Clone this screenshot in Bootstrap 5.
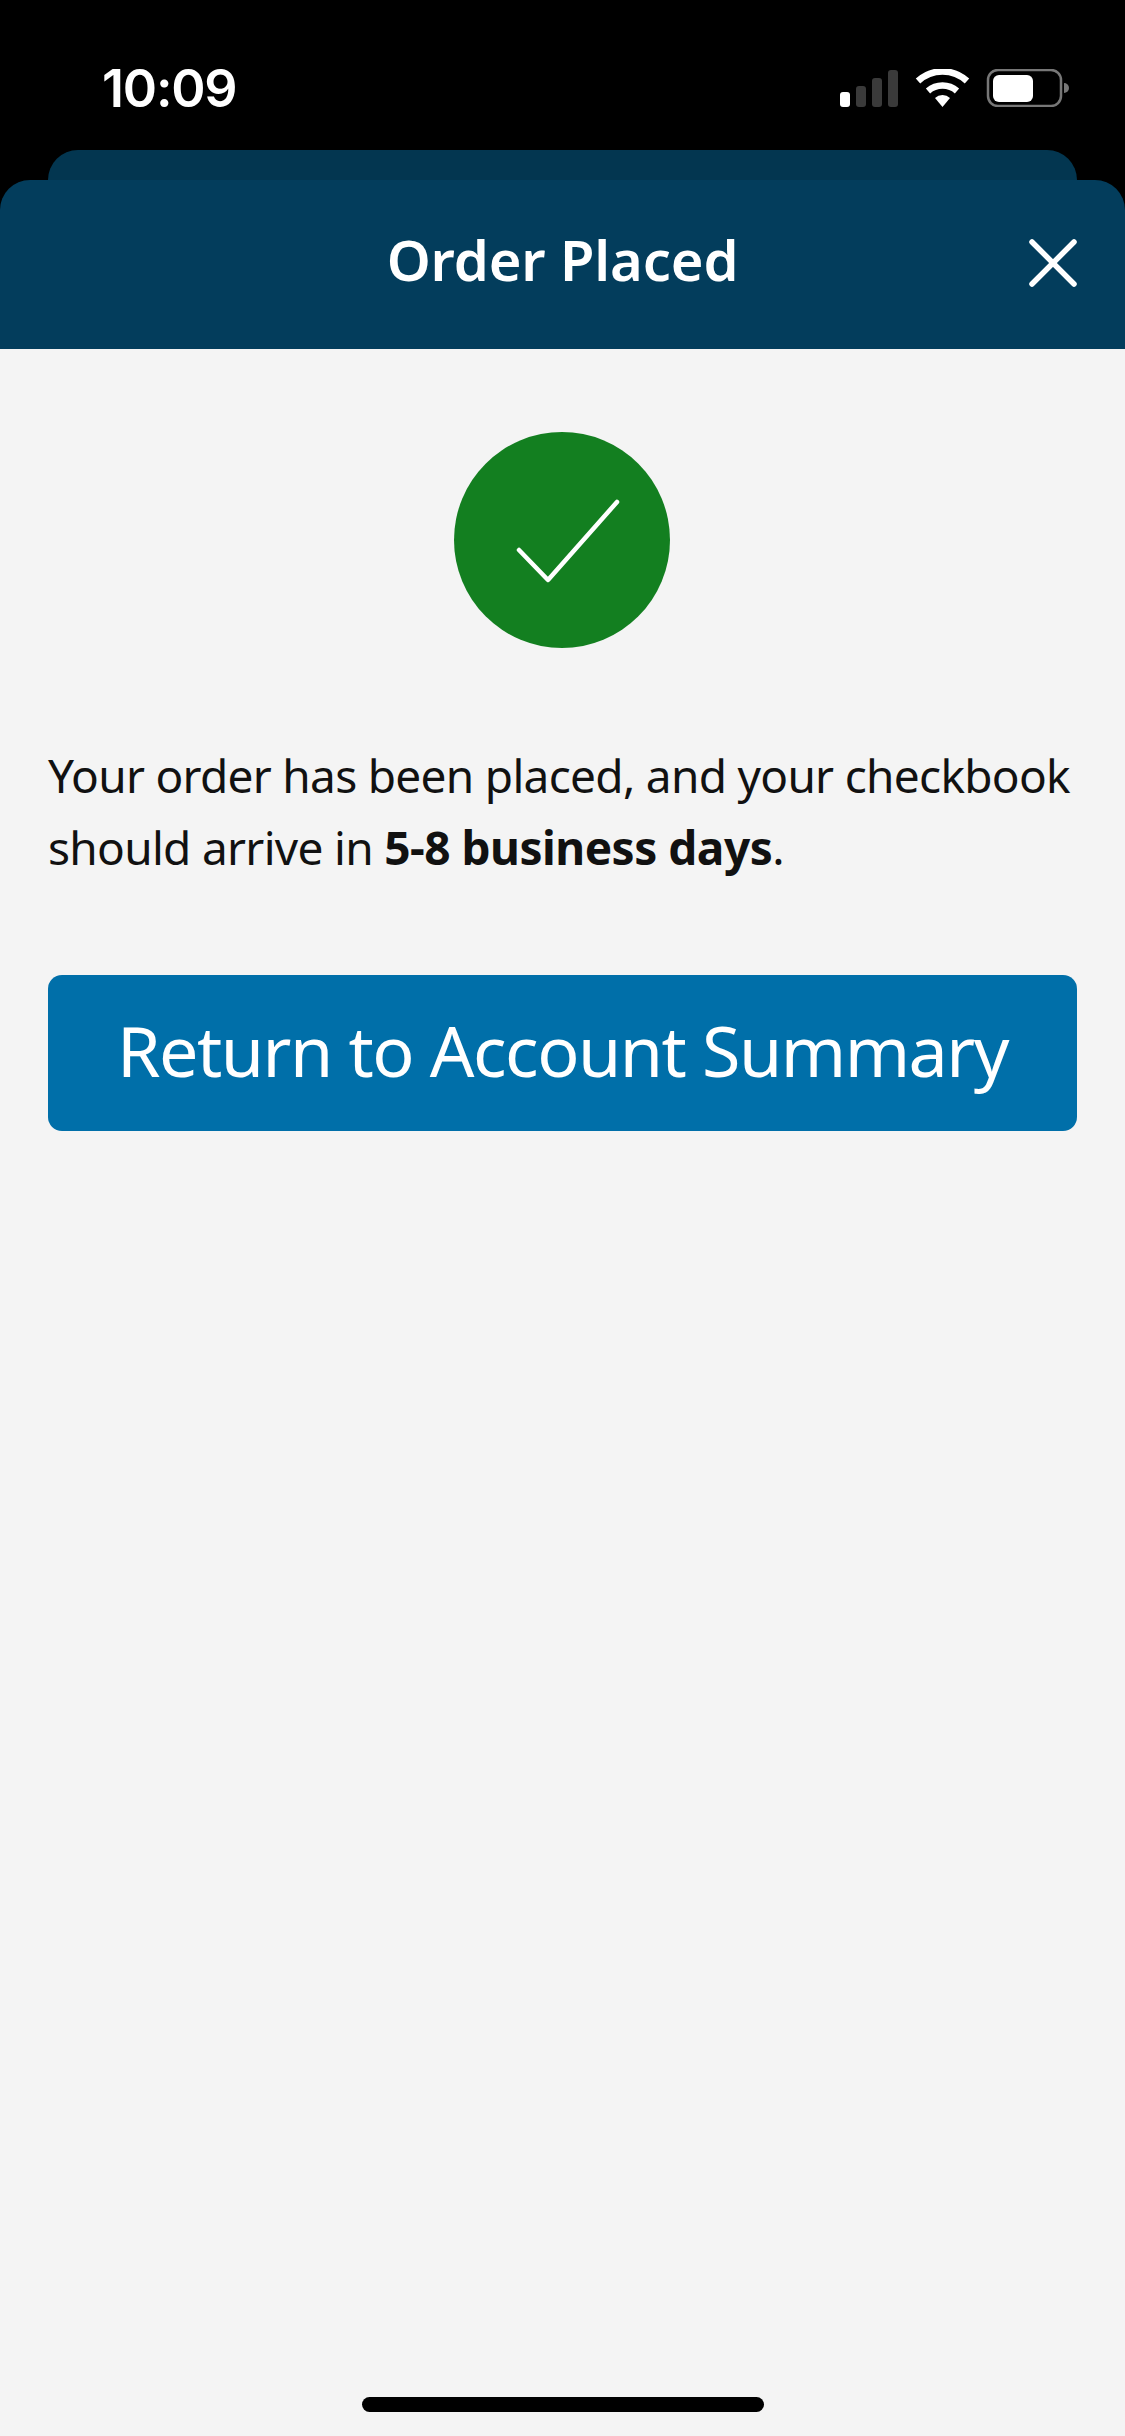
<!DOCTYPE html>
<html lang="en">
<head>
<meta charset="utf-8">
<title>Order Placed</title>
<link href="https://cdn.jsdelivr.net/npm/bootstrap@5.3.0/dist/css/bootstrap.min.css" rel="stylesheet">
<style>
html,body{height:100%}
body{background:#000;font-family:"Noto Sans","Open Sans",sans-serif;color:#111}
.screen{height:2436px;width:1125px}
.status-row{height:150px;padding:69px 56px 0 102px;align-items:flex-start;color:#fff}
.clock{font-family:Inter,"Liberation Sans",sans-serif;font-weight:600;font-size:52px;line-height:40px;letter-spacing:-1.2px}
.status-icons{display:block;width:229px;height:38px}
.back-sheet{height:30px;margin:0 48px;background:#033650;border-radius:30px 30px 0 0}
.head-bar{height:169px;background:#033d5c;border-radius:30px 30px 0 0;color:#fff;padding:0 48px 0 48px}
.head-side{width:48px}
.head-title{font-size:56px;font-weight:600;line-height:1;margin:0;padding-bottom:12px;letter-spacing:-.1px}
.close-x{background:none;border:0;padding:0;width:48px;height:48px;display:block;margin-bottom:3px}
.close-x svg{display:block}
.body-sheet{background:#f4f4f4}
.main-pad{padding:83px 48px 0}
.tick-circle{display:block;margin:0 0 0 406px;width:216px;height:216px}
.msg{font-size:46px;line-height:72px;margin:91px 0 0;color:#111;letter-spacing:-.7px}
.msg strong{font-weight:700;letter-spacing:-.5px}
.cta{display:block;width:100%;height:156px;margin-top:92px;background:#006fa9;border:0;border-radius:14px;color:#fff;font-size:70px;line-height:1;padding:0 0 6px;letter-spacing:-1.5px}
.home-bar{width:402px;height:15px;border-radius:8px;background:#000;margin:0 auto 24px}
</style>
</head>
<body>
<div class="screen d-flex flex-column">
  <div class="status-row d-flex justify-content-between">
    <div class="clock">10:09</div>
    <svg class="status-icons" viewBox="0 0 229 38" aria-hidden="true">
      <rect x="0" y="23" width="10" height="15" rx="3" fill="#fff"/>
      <rect x="16" y="17" width="10" height="21" rx="3" fill="#3a3a3a"/>
      <rect x="32" y="9" width="10" height="29" rx="3" fill="#3a3a3a"/>
      <rect x="48" y="1" width="10" height="37" rx="3" fill="#3a3a3a"/>
      <path d="M78 12 a36 36 0 0 1 49 0" fill="none" stroke="#fff" stroke-width="6.5"/>
      <path d="M88 22 a22 22 0 0 1 29 0" fill="none" stroke="#fff" stroke-width="6.5"/>
      <path d="M95 29 a11 11 0 0 1 15 0 l-7.5 9 z" fill="#fff"/>
      <rect x="148" y="1" width="73" height="36" rx="10" fill="none" stroke="#777" stroke-width="2.5"/>
      <rect x="153" y="6" width="40" height="27" rx="6" fill="#fff"/>
      <path d="M224 14 a5 5 0 0 1 0 10 z" fill="#777"/>
    </svg>
  </div>
  <div class="back-sheet"></div>
  <header class="head-bar d-flex align-items-center justify-content-between">
    <div class="head-side"></div>
    <h1 class="head-title">Order Placed</h1>
    <button class="close-x" type="button" aria-label="Close">
      <svg width="48" height="48" viewBox="0 0 48 48"><path d="M3 3 L45 45 M45 3 L3 45" stroke="#fff" stroke-width="5.5" stroke-linecap="round"/></svg>
    </button>
  </header>
  <main class="body-sheet flex-grow-1 d-flex flex-column">
    <div class="main-pad">
      <svg class="tick-circle" viewBox="0 0 216 216" aria-hidden="true">
        <circle cx="108" cy="108" r="108" fill="#137f20"/>
        <path d="M65 118 L94 148 L163 70" fill="none" stroke="#fff" stroke-width="4.5" stroke-linecap="round" stroke-linejoin="round"/>
      </svg>
      <p class="msg">Your order has been placed, and your checkbook should arrive in <strong>5-8 business days</strong>.</p>
      <button class="cta" type="button">Return to Account Summary</button>
    </div>
    <div class="home-bar mt-auto"></div>
  </main>
</div>
<script src="https://cdn.jsdelivr.net/npm/bootstrap@5.3.0/dist/js/bootstrap.bundle.min.js"></script>
</body>
</html>
